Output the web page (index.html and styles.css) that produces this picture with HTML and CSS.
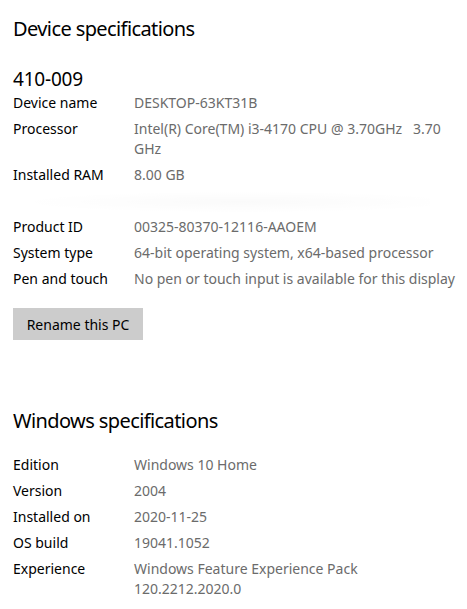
FILE: index.html
```html
<!DOCTYPE html>
<html lang="en">
<head>
<meta charset="utf-8">
<title>About</title>
<link rel="stylesheet" href="styles.css">
</head>
<body>
<main class="page">
  <section class="section">
    <h2 class="section-title">Device specifications</h2>
    <div class="pc-name">410-009</div>
    <dl class="specs">
      <dt>Device name</dt><dd>DESKTOP-63KT31B</dd>
      <dt>Processor</dt><dd>Intel(R) Core(TM) i3-4170 CPU @ 3.70GHz&nbsp;&nbsp; 3.70 GHz</dd>
      <dt>Installed RAM</dt><dd>8.00 GB</dd>
      <dt class="smudge-row"></dt><dd class="smudge-row"><span class="smudge"></span></dd>
      <dt>Product ID</dt><dd>00325-80370-12116-AAOEM</dd>
      <dt>System type</dt><dd>64-bit operating system, x64-based processor</dd>
      <dt>Pen and touch</dt><dd>No pen or touch input is available for this display</dd>
    </dl>
    <button class="btn" type="button">Rename this PC</button>
  </section>
  <section class="section section-windows">
    <h2 class="section-title">Windows specifications</h2>
    <dl class="specs specs-windows">
      <dt>Edition</dt><dd>Windows 10 Home</dd>
      <dt>Version</dt><dd>2004</dd>
      <dt>Installed on</dt><dd>2020-11-25</dd>
      <dt>OS build</dt><dd>19041.1052</dd>
      <dt>Experience</dt><dd>Windows Feature Experience Pack 120.2212.2020.0</dd>
    </dl>
  </section>
</main>
</body>
</html>
```

FILE: styles.css
```css
* { box-sizing: border-box; }
html, body { margin: 0; padding: 0; background: #fff; }
body {
  font-family: "Noto Sans", "Open Sans", "Liberation Sans", sans-serif;
  color: #000;
  overflow: hidden;
}
.page { padding: 14px 0 0 13px; width: 467px; }
.section-title {
  margin: 0;
  font-size: 20px;
  font-weight: 400;
  line-height: 30px;
  letter-spacing: -0.6px;
}
.pc-name {
  margin-top: 23px;
  font-size: 19px;
  line-height: 24px;
  letter-spacing: -0.2px;
}
.specs {
  margin: 2px 0 0;
  display: grid;
  grid-template-columns: 121px 1fr;
  row-gap: 6px;
  font-size: 14px;
  line-height: 20px;
}
.specs dt { margin: 0; }
.specs dd { margin: 0; color: #6b6b6b; padding-right: 6px; }
.smudge-row { height: 20px; }
.smudge {
  display: block;
  width: 420px;
  height: 22px;
  margin-left: -124px;
  background: radial-gradient(ellipse at 55% 50%, rgba(0,0,0,0.018), rgba(0,0,0,0) 70%);
}
.btn {
  margin-top: 19px;
  width: 130px;
  height: 32px;
  border: none;
  background: #cccccc;
  font: inherit;
  font-size: 14px;
  color: #000;
  padding: 0;
}
.section-windows { margin-top: 66px; }
.specs-windows { margin-top: 19px; }
```
